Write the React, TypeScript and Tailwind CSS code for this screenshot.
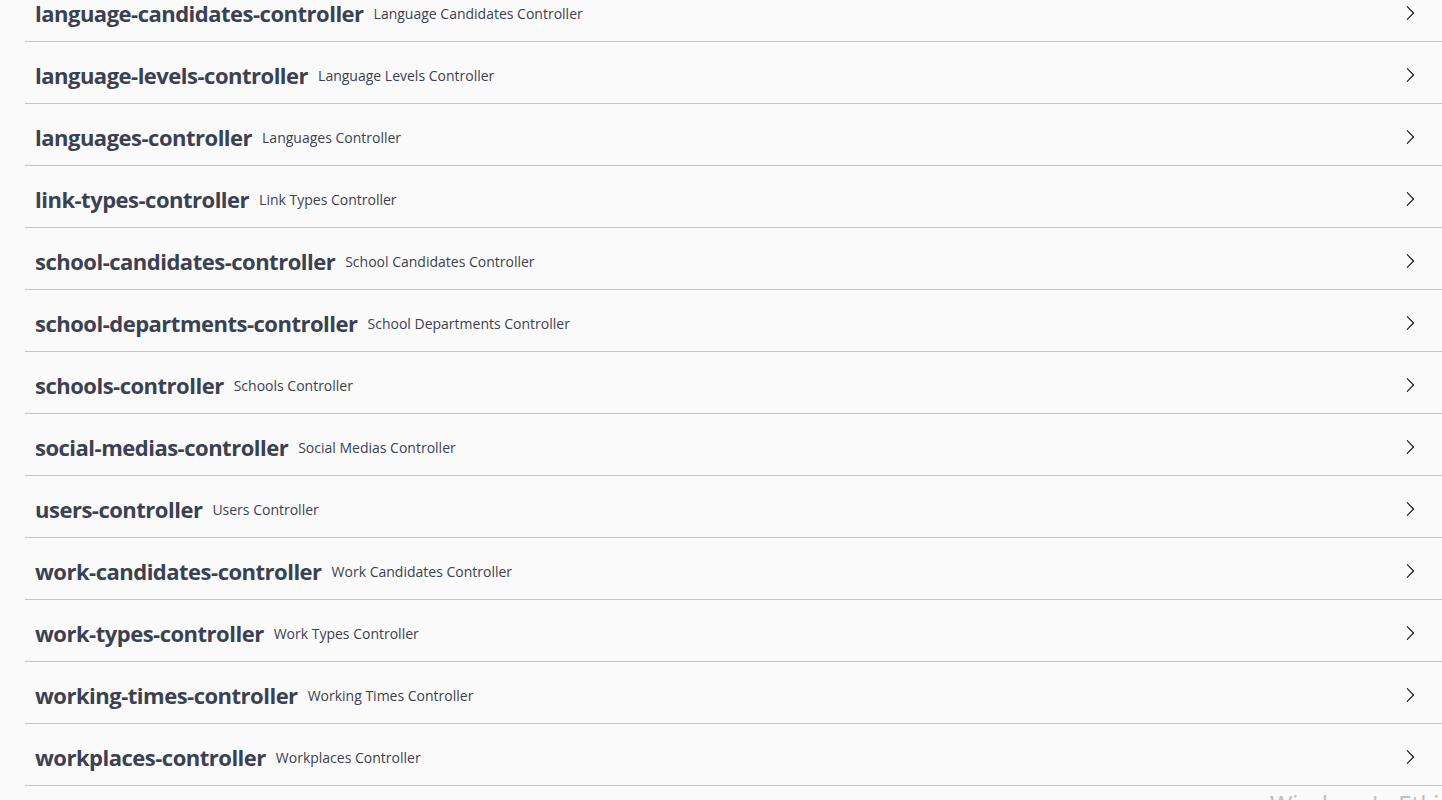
import React from "react";

const tags = [
  ["language-candidates-controller", "Language Candidates Controller"],
  ["language-levels-controller", "Language Levels Controller"],
  ["languages-controller", "Languages Controller"],
  ["link-types-controller", "Link Types Controller"],
  ["school-candidates-controller", "School Candidates Controller"],
  ["school-departments-controller", "School Departments Controller"],
  ["schools-controller", "Schools Controller"],
  ["social-medias-controller", "Social Medias Controller"],
  ["users-controller", "Users Controller"],
  ["work-candidates-controller", "Work Candidates Controller"],
  ["work-types-controller", "Work Types Controller"],
  ["working-times-controller", "Working Times Controller"],
  ["workplaces-controller", "Workplaces Controller"],
];

function Arrow() {
  return (
    <svg width="16" height="16" viewBox="0 0 20 20" className="fill-[#1b1b1b]">
      <path d="M13.25 10L6.109 2.58a.697.697 0 0 1 0-.979.68.68 0 0 1 .969 0l7.83 7.908a.697.697 0 0 1 0 .979l-7.83 7.908a.68.68 0 0 1-.969 0 .697.697 0 0 1 0-.979L13.25 10z" />
    </svg>
  );
}

export default function App() {
  return (
    <div className="relative h-[800px] overflow-hidden bg-[#fafafa] text-[#3b4151]">
      <div className="-mt-[20px] pl-[25px]">
        {tags.map(([name, desc]) => (
          <div
            key={name}
            className="flex h-[62px] items-center border-b border-[#c4c5c8] pl-[10px] pr-[24px] pt-[5px]"
          >
            <span className="font-['Open_Sans',sans-serif] text-[22px] font-bold tracking-[-0.5px]">
              {name}
            </span>
            <span className="ml-[10px] flex-1 font-['Open_Sans',sans-serif] text-[14px]">
              {desc}
            </span>
            <Arrow />
          </div>
        ))}
      </div>
      <div className="absolute left-[1270px] top-[786px] whitespace-nowrap font-['Noto_Sans',sans-serif] text-[24px] text-[#bfbfbf]">
        Windows'u Etkinleştir
      </div>
    </div>
  );
}
